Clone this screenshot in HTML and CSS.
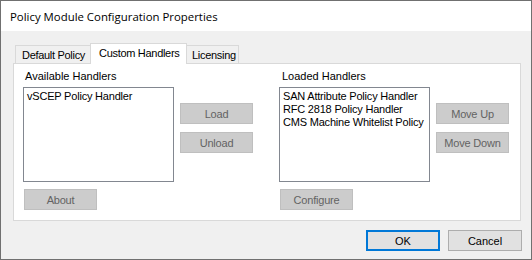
FILE: index.html
```html
<!DOCTYPE html>
<html>
<head>
<meta charset="utf-8">
<link rel="stylesheet" href="styles.css">
</head>
<body>
<div class="window">
  <div class="titlebar">Policy Module Configuration Properties</div>
  <div class="client">
    <div class="tabs">
      <div class="tab tab-default">Default Policy</div>
      <div class="tab tab-active">Custom Handlers</div>
      <div class="tab tab-lic">Licensing</div>
    </div>
    <div class="panel">
      <div class="group">
        <div class="label">Available Handlers</div>
        <div class="listbox">
          <div class="item">vSCEP Policy Handler</div>
        </div>
        <div class="side-buttons">
          <div class="btn disabled">Load</div>
          <div class="btn disabled">Unload</div>
        </div>
        <div class="under"><div class="btn disabled">About</div></div>
      </div>
      <div class="group group-right">
        <div class="label">Loaded Handlers</div>
        <div class="listbox">
          <div class="item">SAN Attribute Policy Handler</div>
          <div class="item">RFC 2818 Policy Handler</div>
          <div class="item">CMS Machine Whitelist Policy</div>
        </div>
        <div class="side-buttons">
          <div class="btn disabled">Move Up</div>
          <div class="btn disabled">Move Down</div>
        </div>
        <div class="under"><div class="btn disabled">Configure</div></div>
      </div>
    </div>
    <div class="footer">
      <div class="btn dlg default">OK</div>
      <div class="btn dlg">Cancel</div>
    </div>
  </div>
</div>
</body>
</html>
```
FILE: styles.css
```css
html, body {
  margin: 0;
  padding: 0;
  background: #ffffff;
}
.window {
  width: 532px;
  height: 260px;
  box-sizing: border-box;
  border: 1px solid #707070;
  display: flex;
  flex-direction: column;
  font-family: "Liberation Sans", Arial, sans-serif;
  font-size: 11px;
  color: #000;
}
.titlebar {
  height: 30px;
  flex: none;
  background: #ffffff;
  display: flex;
  align-items: center;
  padding-left: 9px;
  padding-top: 1px;
  box-sizing: border-box;
  font-family: "Open Sans", "Noto Sans", sans-serif;
  font-size: 11.4px;
  color: #000;
}
.client {
  flex: 1;
  background: #f0f0f0;
  padding: 12px 10px 0 12px;
  display: flex;
  flex-direction: column;
}
.tabs {
  display: flex;
  align-items: flex-end;
  height: 20px;
  padding-left: 2px;
}
.tab {
  box-sizing: border-box;
  border: 1px solid #d9d9d9;
  border-bottom: none;
  background: #f0f0f0;
  height: 18px;
  line-height: 14px;
  padding-top: 2px;
  padding-left: 6px;
  white-space: nowrap;
  letter-spacing: -0.3px;
}
.tab-default { width: 76px; }
.tab-active {
  width: 97px;
  height: 21px;
  margin-left: -1px;
  margin-bottom: -1px;
  background: #ffffff;
  position: relative;
  z-index: 1;
  padding-top: 2px;
  padding-left: 8px;
}
.tab-lic { width: 53px; margin-left: -1px; padding-left: 5px; }
.panel {
  height: 158px;
  box-sizing: border-box;
  border: 1px solid #d9d9d9;
  background: #ffffff;
  padding: 6px 0 0 9px;
  display: flex;
  gap: 26px;
}
.group {
  display: grid;
  grid-template-columns: 151px 73px;
  grid-template-rows: 13px 95px auto;
  column-gap: 6px;
  row-gap: 4px;
}
.label {
  grid-column: 1 / 3;
  padding-left: 2px;
  line-height: 13px;
}
.group-right .label { padding-left: 3px; }
.listbox {
  box-sizing: border-box;
  border: 1px solid #828790;
  background: #fff;
  padding: 1px 3px;
}
.item {
  line-height: 13px;
  white-space: nowrap;
  letter-spacing: -0.2px;
  padding-top: 1px;
  margin-bottom: -1px;
}
.side-buttons {
  padding-top: 16px;
  display: flex;
  flex-direction: column;
  gap: 8px;
}
.under {
  grid-column: 1 / 2;
  padding-top: 3px;
  padding-left: 1px;
}
.btn {
  box-sizing: border-box;
  width: 73px;
  height: 21px;
  display: flex;
  align-items: center;
  justify-content: center;
  border: 1px solid #adadad;
  background: #e1e1e1;
  white-space: nowrap;
}
.btn.disabled {
  background: #cccccc;
  border-color: #bfbfbf;
  color: #636363;
  letter-spacing: -0.2px;
}
.footer {
  display: flex;
  justify-content: flex-end;
  gap: 8px;
  margin-top: 9px;
  margin-right: -1px;
}
.btn.dlg { width: 74px; }
.btn.default {
  border: 2px solid #0078d7;
}
```
